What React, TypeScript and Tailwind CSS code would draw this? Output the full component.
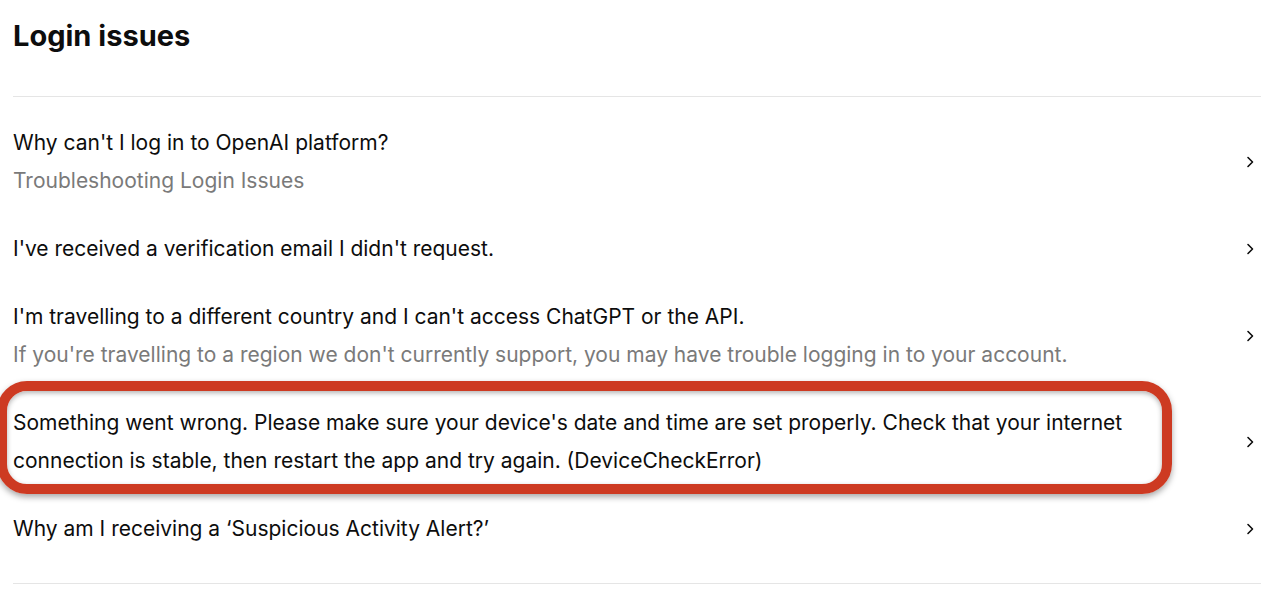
import { ReactNode } from 'react';

interface Article {
  title: string;
  subtitle?: string;
  content?: ReactNode;
}

const articles: Article[] = [
  { title: "Why can't I log in to OpenAI platform?", subtitle: 'Troubleshooting Login Issues' },
  { title: "I've received a verification email I didn't request." },
  {
    title: "I'm travelling to a different country and I can't access ChatGPT or the API.",
    subtitle: "If you're travelling to a region we don't currently support, you may have trouble logging in to your account.",
  },
  {
    title: '',
    content: (
      <>
        Something went wrong. Please make sure your device's date and time are set properly. Check that your internet
        <br />
        connection is stable, then restart the app and try again. (DeviceCheckError)
      </>
    ),
  },
  { title: 'Why am I receiving a \u2018Suspicious Activity Alert?\u2019' },
];

function Chevron() {
  return (
    <svg width="8" height="12" viewBox="0 0 8 12" fill="none" className="shrink-0">
      <path d="M2 1.5L6.5 6L2 10.5" stroke="#0d0d0d" strokeWidth="1.6" strokeLinecap="round" strokeLinejoin="round" />
    </svg>
  );
}

export default function App() {
  return (
    <div className="w-[1280px] h-[591px] bg-white overflow-hidden relative font-['Inter','Noto_Sans',sans-serif] text-[#0d0d0d]">
      <div className="pl-[13px] pr-[19px]">
        <h1 className="text-[29px] font-bold leading-[34px] pt-[19px] h-[96px]">Login issues</h1>
        <div className="border-t border-[#e5e5e5]" />
        <ul className="mt-[12px] mb-[20px]">
          {articles.map((a, i) => (
            <li key={i} className="flex items-center justify-between py-[15px]">
              <div className="text-[21px] leading-[38px]">
                {a.content ?? a.title}
                {a.subtitle && <div className="text-[#7a7a7a]">{a.subtitle}</div>}
              </div>
              <div className="pr-[7px]">
                <Chevron />
              </div>
            </li>
          ))}
        </ul>
        <div className="border-t border-[#e5e5e5]" />
      </div>
      {/* annotation highlight */}
      <div className="absolute left-[-3px] top-[381px] w-[1175px] h-[113px] rounded-[30px] border-[10px] border-[#cd3a22] shadow-[0_3px_6px_rgba(0,0,0,0.35),inset_0_2px_5px_rgba(0,0,0,0.3)] pointer-events-none" />
    </div>
  );
}
